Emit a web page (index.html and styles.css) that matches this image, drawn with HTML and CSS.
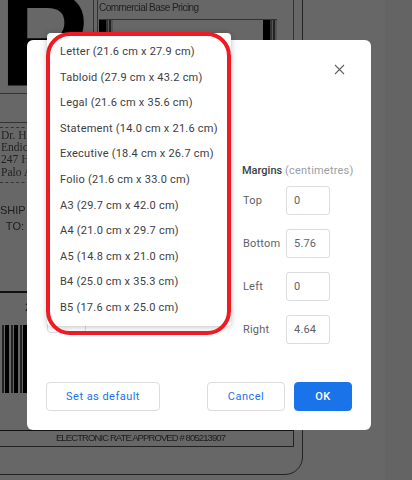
FILE: index.html
```html
<!DOCTYPE html>
<html lang="en">
<head>
    <meta charset="UTF-8">
    <meta name="viewport" content="width=device-width, initial-scale=1.0">
    <title>Page setup</title>
    <link rel="stylesheet" href="styles.css">
</head>
<body>

    <!-- Shipping label behind the dialog -->
    <div class="label">
        <span class="big-p">P</span>
        <div class="rule rule-v1"></div>
        <div class="rule rule-v2"></div>
        <div class="rule rule-v3"></div>
        <div class="rule rule-h1"></div>
        <div class="rule rule-h2"></div>
        <div class="rule rule-thick"></div>
        <div class="dash dash-1"></div>
        <div class="dash dash-2"></div>
        <span class="pricing">Commercial Base Pricing</span>
        <div class="code-box">
            <div class="code-bars"></div>
            <div class="code-bars"></div>
        </div>
        <div class="sender">Dr. Hale<br>Endicia<br>247 High<br>Palo Alto</div>
        <div class="ship">SHIP<br>TO:</div>
        <span class="zone">2</span>
        <div class="barcode"></div>
        <div class="rate-box">ELECTRONIC RATE APPROVED # 805213907</div>
        <div class="label-frame"></div>
    </div>
    <div class="page-edge"></div>

    <!-- Dialog -->
    <div class="dialog">
        <div class="dialog-head">
            <button class="close" aria-label="Close">
                <svg width="11" height="11" viewBox="0 0 11 11"><path d="M1 1l9 9M10 1l-9 9" stroke="#5f6368" stroke-width="1.1" fill="none"/></svg>
            </button>
        </div>
        <div class="dialog-body">
            <div class="left-col">
                <div class="select-stub"></div>
            </div>
            <div class="margins">
                <div class="margins-title"><b>Margins</b> <span>(centimetres)</span></div>
                <div class="margin-row"><label>Top</label><input type="text" value="0"></div>
                <div class="margin-row"><label>Bottom</label><input type="text" value="5.76"></div>
                <div class="margin-row"><label>Left</label><input type="text" value="0"></div>
                <div class="margin-row"><label>Right</label><input type="text" value="4.64"></div>
            </div>
        </div>
        <div class="dialog-foot">
            <button class="btn btn-default">Set as default</button>
            <div class="foot-right">
                <button class="btn btn-cancel">Cancel</button>
                <button class="btn btn-ok">OK</button>
            </div>
        </div>
    </div>

    <!-- Open paper size menu -->
    <ul class="size-menu">
        <li>Letter (21.6 cm x 27.9 cm)</li>
        <li>Tabloid (27.9 cm x 43.2 cm)</li>
        <li>Legal (21.6 cm x 35.6 cm)</li>
        <li>Statement (14.0 cm x 21.6 cm)</li>
        <li>Executive (18.4 cm x 26.7 cm)</li>
        <li>Folio (21.6 cm x 33.0 cm)</li>
        <li>A3 (29.7 cm x 42.0 cm)</li>
        <li>A4 (21.0 cm x 29.7 cm)</li>
        <li>A5 (14.8 cm x 21.0 cm)</li>
        <li>B4 (25.0 cm x 35.3 cm)</li>
        <li>B5 (17.6 cm x 25.0 cm)</li>
    </ul>

    <!-- Red annotation ring -->
    <div class="ring"></div>

</body>
</html>
```

FILE: styles.css
```css
html, body {
    margin: 0;
    height: 100%;
}
body {
    position: relative;
    width: 412px;
    height: 480px;
    overflow: hidden;
    background-color: #666766;
    font-family: Roboto, Arial, sans-serif;
}

/* label behind the dialog: a free canvas */
.label {
    position: absolute;
    inset: 0;
    color: #1c1c1c;
    filter: blur(0.35px);
}
.page-edge {
    position: absolute;
    top: 0;
    bottom: 0;
    left: 385px;
    right: 0;
    background-color: #636463;
}
.big-p {
    position: absolute;
    left: -1px;
    top: -28px;
    font-family: "Liberation Sans", Arial, sans-serif;
    font-weight: bold;
    font-size: 134px;
    line-height: 134px;
    color: #000;
}
.rule {
    position: absolute;
    background-color: #333;
}
.rule-v1 { left: 93px; top: 0; width: 1px; height: 94px; }
.rule-v2 { left: 293px; top: 0; width: 1px; height: 40px; }
.rule-v3 { left: 97px; top: 0; width: 1px; height: 40px; }
.rule-h1 { left: 0; top: 93px; width: 94px; height: 1px; }
.rule-h2 { left: 0; top: 122px; width: 30px; height: 1px; }
.rule-thick { left: 0; top: 291px; width: 30px; height: 2px; background-color: #111; }
.dash {
    position: absolute;
    left: 0;
    width: 30px;
    border-top: 1px dashed #333;
}
.dash-1 { top: 127px; }
.dash-2 { top: 182px; }
.pricing {
    position: absolute;
    left: 99px;
    top: 1px;
    font-family: "Liberation Sans", Arial, sans-serif;
    font-size: 10px;
    line-height: 14px;
    letter-spacing: -0.55px;
    color: #222;
}
.code-box {
    position: absolute;
    left: 99px;
    top: 19px;
    width: 178px;
    height: 30px;
    display: flex;
    justify-content: space-between;
    border-top: 1px solid #333;
}
.code-bars {
    width: 14px;
    background: linear-gradient(90deg, #000 0 7px, #333 7px 9px, #555 9px 10px, #222 10px 12px, #555 12px 14px);
}
.sender {
    position: absolute;
    left: 1px;
    top: 129px;
    font-family: "Liberation Serif", serif;
    font-size: 11.5px;
    line-height: 12.2px;
    color: #222;
}
.ship {
    position: absolute;
    left: 0;
    top: 202px;
    width: 24px;
    text-align: right;
    font-family: "Liberation Sans", Arial, sans-serif;
    font-size: 11px;
    line-height: 16px;
    color: #1c1c1c;
}
.zone {
    position: absolute;
    left: 25px;
    top: 300px;
    font-family: "Liberation Sans", Arial, sans-serif;
    font-size: 11px;
    line-height: 14px;
    color: #1c1c1c;
}
.barcode {
    position: absolute;
    left: 2px;
    top: 325px;
    width: 26px;
    height: 68px;
    background: repeating-linear-gradient(90deg, #222 0 2px, #666 2px 3px, #000 3px 7px, #666 7px 9px);
}
.rate-box {
    position: absolute;
    left: 0;
    top: 430px;
    width: 281px;
    height: 15px;
    padding-right: 12px;
    border-top: 1px solid #111;
    border-right: 1px solid #222;
    border-bottom: 1px solid #222;
    text-align: center;
    font-family: "Liberation Sans", Arial, sans-serif;
    font-size: 9.5px;
    line-height: 14px;
    letter-spacing: -0.9px;
    color: #1c1c1c;
}
.label-frame {
    position: absolute;
    left: -20px;
    top: -20px;
    width: 321px;
    height: 493px;
    border: 1px solid #222;
    border-radius: 0 0 18px 0;
}

/* dialog */
.dialog {
    position: absolute;
    left: 27px;
    top: 40px;
    width: 344px;
    height: 390px;
    box-sizing: border-box;
    padding: 0 19px 19px;
    display: flex;
    flex-direction: column;
    background-color: #fff;
    border-radius: 6px;
}
.dialog-head {
    height: 123px;
    flex: none;
    display: flex;
    justify-content: flex-end;
    align-items: flex-start;
}
.close {
    margin: 24px 7px 0 0;
    padding: 0;
    width: 11px;
    height: 11px;
    display: flex;
    background: none;
    border: none;
}
.dialog-body {
    display: flex;
    flex: 1;
}
.left-col {
    flex: none;
    width: 196px;
    height: 170px;
    display: flex;
    align-items: flex-end;
}
.select-stub {
    margin-left: 1px;
    width: 39px;
    height: 30px;
    box-sizing: border-box;
    border: 1px solid #dadce0;
    border-radius: 4px;
}
.margins-title {
    font-size: 11px;
    line-height: 16px;
    color: #3c4043;
    margin-bottom: 7px;
    letter-spacing: 0.2px;
    white-space: nowrap;
}
.margins-title b {
    font-weight: 500;
    letter-spacing: 0;
}
.margins-title span {
    color: #9aa0a6;
}
.margin-row {
    display: flex;
    align-items: center;
    height: 28px;
    margin-bottom: 15px;
    font-size: 11px;
    color: #5f6368;
}
.margin-row label {
    width: 44px;
    padding-left: 1px;
    box-sizing: border-box;
    letter-spacing: 0.2px;
}
.margin-row input {
    width: 44px;
    height: 29px;
    box-sizing: border-box;
    padding: 0 7px;
    border: 1px solid #dadce0;
    border-radius: 3px;
    font-family: inherit;
    font-size: 11px;
    letter-spacing: 0.2px;
    color: #5f6368;
}
.dialog-foot {
    display: flex;
    justify-content: space-between;
}
.foot-right {
    display: flex;
    gap: 9px;
}
.btn {
    height: 29px;
    box-sizing: border-box;
    background-color: #fff;
    border: 1px solid #dadce0;
    border-radius: 4px;
    font-family: inherit;
    font-size: 11px;
    letter-spacing: 0.47px;
    color: #1a73e8;
    padding: 0;
}
.btn-default { width: 114px; }
.btn-cancel { width: 78px; }
.btn-ok {
    width: 58px;
    background-color: #1a73e8;
    border-color: #1a73e8;
    color: #fff;
    font-weight: 500;
}

/* open dropdown */
.size-menu {
    position: absolute;
    left: 47px;
    top: 33px;
    width: 184px;
    height: 293px;
    box-sizing: border-box;
    margin: 0;
    padding: 6px 0 0;
    list-style: none;
    background-color: #fff;
    border-radius: 4px;
    box-shadow: 0 1px 6px rgba(0,0,0,0.25);
    font-size: 11px;
    color: #3c4043;
}
.size-menu li {
    height: 25.6px;
    line-height: 25.6px;
    padding-left: 13px;
    letter-spacing: 0.23px;
    white-space: nowrap;
}
.ring {
    position: absolute;
    left: 46px;
    top: 32px;
    width: 185px;
    height: 303px;
    box-sizing: border-box;
    border: 4px solid #ed1c24;
    border-radius: 24px;
}
```
